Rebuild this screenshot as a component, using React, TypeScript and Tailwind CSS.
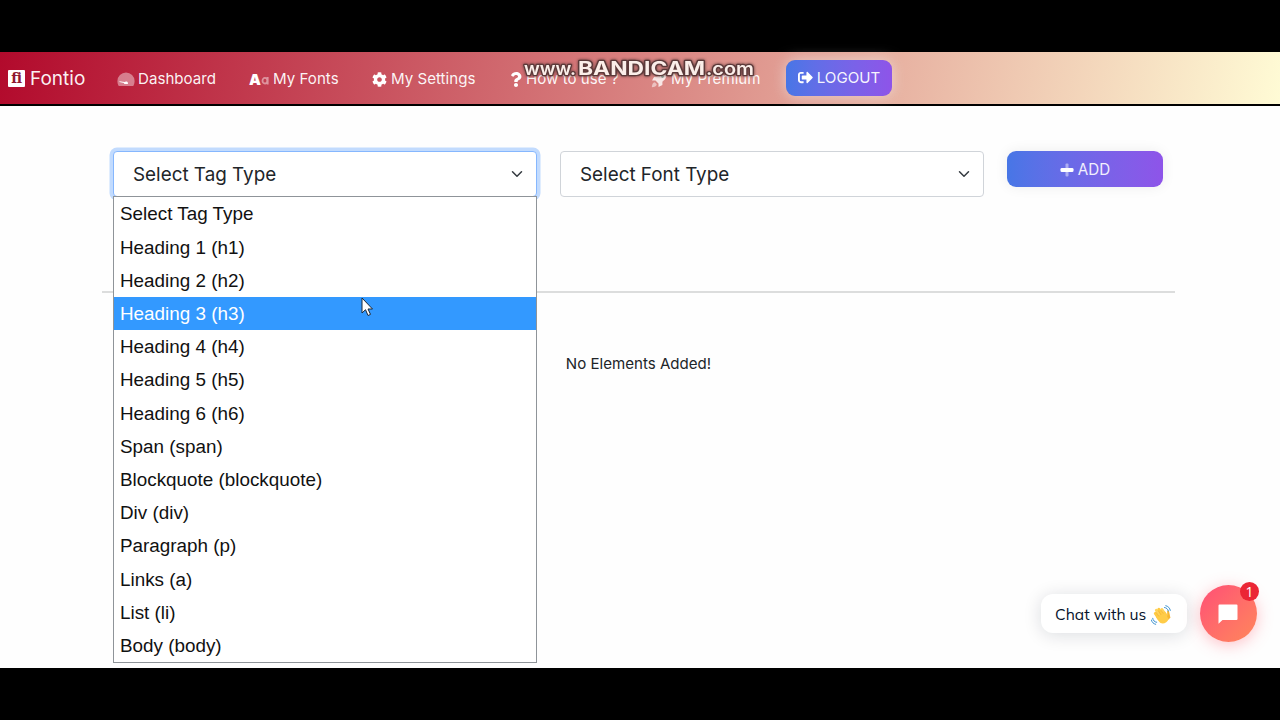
import React from "react";
import { FaCog, FaQuestion, FaSignOutAlt } from "react-icons/fa";

const options = [
  "Select Tag Type",
  "Heading 1 (h1)",
  "Heading 2 (h2)",
  "Heading 3 (h3)",
  "Heading 4 (h4)",
  "Heading 5 (h5)",
  "Heading 6 (h6)",
  "Span (span)",
  "Blockquote (blockquote)",
  "Div (div)",
  "Paragraph (p)",
  "Links (a)",
  "List (li)",
  "Body (body)",
];

function Chevron() {
  return (
    <svg viewBox="0 0 16 16" className="h-[12px] w-[12px]" fill="none" stroke="#343a40" strokeWidth="2" strokeLinecap="round" strokeLinejoin="round">
      <path d="M2 5l6 6 6-6" />
    </svg>
  );
}

function Gauge() {
  return (
    <svg viewBox="0 0 18 16" className="mt-[1px] h-4 w-[18px] shrink-0">
      <path d="M9 .5A8.600 8.600 0 0 0 .4 9.100c0 1.900.5 3.500 1.300 4.900h14.600c.8-1.400 1.300-3 1.300-4.900A8.600 8.600 0 0 0 9 .5z" fill="#fff" fillOpacity=".42" />
      <path d="M2.500 9.200l5.200.8a2 2 0 0 1 3.300 1.200c0 .4-.1.600-.3.900H7.300a2 2 0 0 1-.3-1l-4.600-1.100z" fill="#fff" />
    </svg>
  );
}

function Rocket() {
  return (
    <svg viewBox="0 0 16 16" className="mt-[2px] h-4 w-4 shrink-0">
      <path d="M15.500.6C11 0 8.300 1.700 6.300 4.800H3.200L1 8.600h3.500l3 3v3.500l3.900-2.200V9.700C14.400 7.700 16 5 15.500.6z" fill="#fff" fillOpacity=".8" />
      <path d="M3.800 10.300c-2 .3-2.700 2.300-3 5 2.700-.3 4.700-1 5-3z" fill="#fff" fillOpacity=".5" />
      <circle cx="11.500" cy="4.500" r="1.400" fill="#8fa79c" />
    </svg>
  );
}

function Watermark() {
  return (
    <svg className="pointer-events-none absolute left-[516px] top-[5px] h-[28px] w-[246px]" viewBox="0 0 246 28">
      <g
        fontFamily="Inter, 'Liberation Sans', sans-serif"
        fill="#fbeee9"
        stroke="#5c3a3a"
        strokeWidth="2.500"
        strokeLinejoin="round"
        paintOrder="stroke"
        style={{ filter: "drop-shadow(0 0 1.500px #5c3a3a)" }}
      >
        <text x="8" y="18" fontSize="18" fontWeight="600" textLength="52" lengthAdjust="spacingAndGlyphs">www.</text>
        <text x="62" y="18" fontSize="19" fontWeight="700" textLength="127" lengthAdjust="spacingAndGlyphs">BANDICAM</text>
        <text x="190" y="18" fontSize="18" fontWeight="600" textLength="48" lengthAdjust="spacingAndGlyphs">.com</text>
      </g>
    </svg>
  );
}

export default function App() {
  return (
    <div className="flex h-[720px] w-[1280px] flex-col overflow-hidden bg-black py-[52px] font-[Inter,'Liberation_Sans',sans-serif] text-[#212529]">
      <div className="relative flex h-[616px] flex-col bg-[#fefefe]">
        <header className="relative flex h-[54px] shrink-0 items-center border-b-2 border-black bg-[linear-gradient(100deg,#b20a2c,#fffbd5)] text-[15.130px] text-white/95">
          <div className="flex w-[117px] items-center pl-2 text-[19px]">
            <span className="mr-[5px] flex h-[17px] w-[17px] shrink-0 items-center justify-center rounded-[1px] bg-white font-['DejaVu_Serif',serif] text-[14px] font-bold leading-none tracking-[-0.5px] text-[#8f1a30]">fi</span>
            <span className="pt-[2px]">Fontio</span>
          </div>
          <nav className="flex items-center whitespace-nowrap pt-[2px]">
            <a className="flex w-[132px] items-center gap-[3px]"><Gauge />Dashboard</a>
            <a className="flex w-[123px] items-center gap-1">
              <span className="flex w-5 items-baseline text-[15px] font-black leading-none text-white">A<svg viewBox="0 0 8 9" className="h-[9px] w-2"><path d="M6.700 1v7.500M6.300 4.700a2.400 2.800 0 1 1-4.800 0 2.400 2.800 0 1 1 4.800 0z" fill="none" stroke="#fff" strokeOpacity=".45" strokeWidth="1.800" /></svg></span>
              My Fonts
            </a>
            <a className="flex w-[138px] items-center gap-1"><FaCog className="h-[15px] w-[15px] text-white" />My Settings</a>
            <a className="flex w-[141px] items-center gap-1"><FaQuestion className="h-[15px] w-[12px] text-white" />How to use ?</a>
            <a className="flex w-[135px] items-center gap-1"><Rocket />My Premium</a>
          </nav>
          <button className="mb-[1px] flex h-[36px] w-[106px] items-center justify-center gap-1 rounded-[9px] bg-linear-to-r from-[#4776e6] to-[#8e54e9] shadow-[0_0_14px_#eeeeee99]">
            <FaSignOutAlt className="h-[15px] w-[15px] text-white" /><span className="pt-px">LOGOUT</span>
          </button>
          <Watermark />
        </header>

        <main className="pl-[102px] pr-[105px] pt-[45px]">
          <div className="flex h-[142px] items-start border-b-2 border-[#dcdddd] pl-[11px]">
            <div className="relative w-[425px]">
              <div className="flex h-[46px] w-[424px] items-center justify-between rounded-[4px] border border-[#86b7fe] bg-white pl-[19px] pr-[13px] text-[18.850px] shadow-[0_0_0_3.500px_#c2dbfe]">
                <span className="pt-[2px]">Select Tag Type</span> <Chevron />
              </div>
              <ul className="absolute left-0 top-[45px] w-[424px] border border-[#8f9499] bg-white font-['Liberation_Sans',Arial,sans-serif] text-[18.850px] text-[#111]">
                {options.map((o) => (
                  <li key={o} className={o === "Heading 3 (h3)" ? "flex h-[33.190px] items-center bg-[#3399ff] pl-[6px] pt-[2px] text-white" : "flex h-[33.190px] items-center pl-[6px] pt-[2px]"}>
                    {o}
                  </li>
                ))}
              </ul>
            </div>
            <div className="ml-[22px] flex h-[46px] w-[424px] items-center justify-between rounded-[4px] border border-[#d0d4d9] bg-white pl-[19px] pr-[13px] text-[18.850px]">
              <span className="pt-[2px]">Select Font Type</span> <Chevron />
            </div>
            <button className="ml-[23px] flex h-[36px] w-[156px] items-center justify-center gap-1 rounded-[9px] bg-linear-to-r from-[#4776e6] to-[#8e54e9] pt-[1px] text-[15.200px] text-white/90 shadow-[0_0_14px_#eeeeee]">
              <svg viewBox="0 0 14 14" className="h-[14px] w-[14px]">
                <rect x="5.500" y=".5" width="3" height="13" rx="1" fill="#fff" fillOpacity=".45" />
                <rect x=".5" y="5" width="13" height="4" rx="1.300" fill="#fff" />
              </svg>
              <span className="pt-px">ADD</span>
            </button>
          </div>
          <p className="mt-[59px] text-center text-[15.100px] leading-6">No Elements Added!</p>
        </main>

        <div className="absolute bottom-[26px] right-[23px] flex items-center gap-[13px]">
          <div className="flex h-[39px] w-[146px] items-center rounded-[12px] bg-white pl-[14px] font-[Mulish,Nunito,Lato,sans-serif] text-[15.600px] text-[#06132b] shadow-[0_2px_18px_rgba(0,20,40,0.14)]">
            <span className="w-[96px] whitespace-nowrap pt-[2px]">Chat with us</span>
            <svg viewBox="0 0 20 20" className="mt-[2px] h-5 w-5">
              <g transform="rotate(-34 10 10)">
                <rect x="4.700" y="4" width="3" height="10" rx="1.500" fill="#ffca42" />
                <rect x="7.300" y="2" width="3" height="12" rx="1.500" fill="#ffd35a" />
                <rect x="9.900" y="2.600" width="3" height="12" rx="1.500" fill="#ffca42" />
                <rect x="12.500" y="4.500" width="2.800" height="10" rx="1.400" fill="#ffd35a" />
                <path d="M4.700 9h10.600v5c0 3-2 5-5 5-3.500 0-5.600-2-5.600-5z" fill="#ffcc48" />
                <path d="M14.500 14.500l2.600-4c.7-1 2-.3 1.600 1l-2.200 5.500-3 1.500z" fill="#f7b731" />
                <path d="M7.500 5v5M10.100 5v5M12.700 6v4" stroke="#efa82b" strokeWidth=".5" />
              </g>
              <path d="M13.500 2.500c2 .3 3.400 1.500 3.800 3.500M14.800.7c2.400.5 4.100 2.300 4.500 4.700M1.700 13.300c.3 2.200 1.800 3.700 4 4M.4 15c.5 2.300 2 3.800 4.300 4.300" fill="none" stroke="#3b91cf" strokeWidth="1" strokeLinecap="round" />
            </svg>
          </div>
          <div className="relative flex h-[57px] w-[57px] items-center justify-center rounded-full bg-linear-to-br from-[#ff4d75] to-[#ff865a] shadow-[0_3px_16px_rgba(255,80,100,0.35)]">
            <svg viewBox="0 0 20 20" className="mr-px h-5 w-5" fill="#fff"><path d="M1.500.5h17a1 1 0 0 1 1 1v13.500a1 1 0 0 1-1 1H4.500L.5 19.700V1.500a1 1 0 0 1 1-1z" /></svg>
            <span className="absolute -right-[2px] -top-[3px] flex h-[19px] w-[19px] items-center justify-center rounded-full bg-[#eb2635] font-['Open_Sans',sans-serif] text-[14px] text-white">1</span>
          </div>
        </div>

        <svg viewBox="0 0 12 20" className="absolute left-[361px] top-[245px] h-5 w-3">
          <path d="M1 1v15l3.500-3.300L7 18.500l2.500-1.100L7 12h4.500z" fill="#fff" stroke="#1b2838" strokeWidth="1" strokeLinejoin="round" />
        </svg>
      </div>
    </div>
  );
}
